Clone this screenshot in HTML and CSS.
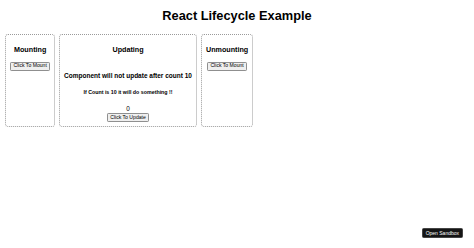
FILE: index.html
```html
<!DOCTYPE html>
<html>
<head>
<meta charset="utf-8">
<title>React Lifecycle Example</title>
<link rel="stylesheet" href="styles.css">
</head>
<body>
<div class="app">
  <h1 class="title">React Lifecycle Example</h1>
  <div class="row">
    <div class="card">
      <h3 class="card-title">Mounting</h3>
      <button class="btn">Click To Mount</button>
    </div>
    <div class="card">
      <h3 class="card-title">Updating</h3>
      <h4 class="note">Component will not update after count 10</h4>
      <h5 class="hint">If Count is 10 it will do something !!</h5>
      <div class="count">0</div>
      <button class="btn">Click To Update</button>
    </div>
    <div class="card">
      <h3 class="card-title">Unmounting</h3>
      <button class="btn">Click To Mount</button>
    </div>
  </div>
</div>
<a class="sandbox" href="#">Open Sandbox</a>
</body>
</html>
```
FILE: styles.css
```css
html, body {
  margin: 0;
  padding: 0;
  background: #ffffff;
}
body {
  padding: 3.2px;
  font-family: "Liberation Sans", Arial, sans-serif;
  color: #000;
}
.app {
  text-align: center;
}
.title {
  font-size: 12.8px;
  font-weight: bold;
  margin: 5.4px 0 8.6px;
  line-height: 14.7px;
}
.row {
  display: flex;
  align-items: stretch;
  text-align: center;
}
.card {
  margin: 2px;
  padding: 4px;
  border: 1px dotted #9a9a9a;
  border-radius: 3px;
  font-size: 6.4px;
  line-height: 7.4px;
}
.card-title {
  font-size: 7.2px;
  line-height: 8.3px;
  margin: 7.2px 0;
}
.note {
  font-size: 6.5px;
  line-height: 7.4px;
  margin: 18px 0 8.9px;
}
.hint {
  font-size: 5.3px;
  line-height: 6.1px;
  margin: 0 0 10.4px;
}
.count {
  font-size: 6.4px;
  line-height: 7.4px;
  margin-bottom: 0.6px;
}
.btn {
  display: block;
  margin: 0 auto;
  font-family: "Liberation Sans", Arial, sans-serif;
  font-size: 5.1px;
  line-height: 5.9px;
  padding: 0.7px 2.3px;
  border: 0.8px solid #8f8f8f;
  border-radius: 1.2px;
  background: #efefef;
  color: #000;
}
.sandbox {
  position: fixed;
  right: 11px;
  bottom: 10px;
  background: #151515;
  color: #ffffff;
  font-size: 5px;
  line-height: 6px;
  padding: 1px 3px;
  border: 0.8px solid #444;
  border-radius: 1.5px;
  text-decoration: none;
}
```
